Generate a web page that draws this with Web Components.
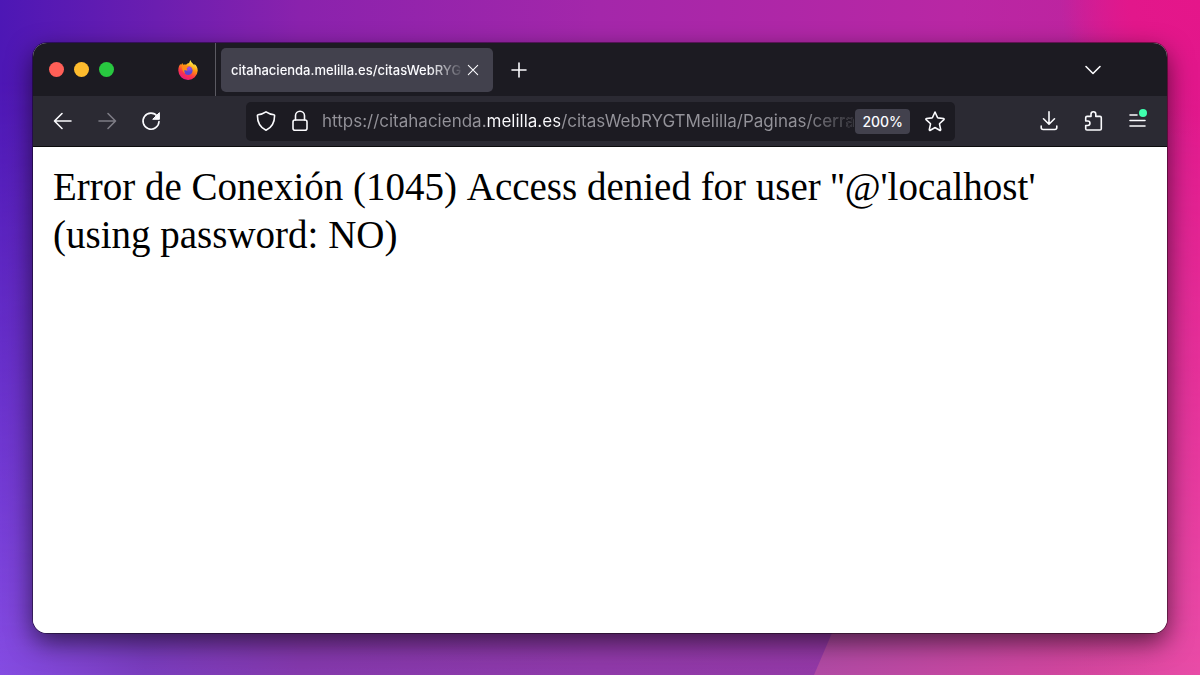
<!DOCTYPE html>
<html lang="es">
<head>
<meta charset="utf-8">
<title>citahacienda.melilla.es</title>
<style>
html, body { margin: 0; min-height: 100vh; }
body { font-family: Inter, "Liberation Sans", sans-serif; display: flex; }
</style>
</head>
<body>
<desktop-backdrop>
  <browser-window>
    <tab-strip slot="tabs"></tab-strip>
    <nav-toolbar slot="toolbar"></nav-toolbar>
    <page-view>Error de Conexión (1045) Access denied for user ''@'localhost' (using password: NO)</page-view>
  </browser-window>
</desktop-backdrop>
<script>
const define = (name, html) => customElements.define(name, class extends HTMLElement {
  constructor() {
    super();
    this.attachShadow({ mode: "open" }).innerHTML = html;
  }
});

define("desktop-backdrop", `
<style>
:host {
  flex: 1; display: flex; box-sizing: border-box; min-height: 100vh; padding: 43px 33px 42px; position: relative; isolation: isolate;
  background: linear-gradient(90deg, #4d17b5 0%, #6b1eb0 13%, #8a22ad 25%, #a427aa 50%, #b927a4 80%, #bd24a0 89%, #db1a90 97%, #e2178c 100%);
}
svg { position: absolute; inset: 0; width: 100%; height: 100%; z-index: -1; }
::slotted(*) { flex: 1; }
</style>
<svg viewBox="0 0 1200 675" preserveAspectRatio="none" aria-hidden="true">
  <defs>
    <linearGradient id="low"><stop offset="0" stop-color="#854ce2"/><stop offset=".12" stop-color="#793dbd"/><stop offset=".25" stop-color="#8439ac"/><stop offset=".5" stop-color="#8f3aa9"/><stop offset=".7" stop-color="#9339a6"/><stop offset=".88" stop-color="#cb459a"/><stop offset="1" stop-color="#e94ca7"/></linearGradient>
    <linearGradient id="fade" x1="0" y1="0" x2="0" y2="1"><stop offset=".12" stop-color="#000"/><stop offset="1" stop-color="#fff"/></linearGradient>
    <linearGradient id="pink" gradientUnits="userSpaceOnUse" x1="814" y1="0" x2="1160" y2="0"><stop offset="0" stop-color="#b04aa4"/><stop offset=".6" stop-color="#cb469f"/><stop offset="1" stop-color="#df47a0" stop-opacity="0"/></linearGradient>
    <radialGradient id="corner" gradientUnits="userSpaceOnUse" cx="1200" cy="0" r="140"><stop offset="0" stop-color="#e5168a"/><stop offset=".5" stop-color="#e2178b"/><stop offset="1" stop-color="#e2178b" stop-opacity="0"/></radialGradient>
    <mask id="m"><rect width="1200" height="675" fill="url(#fade)"/></mask>
  </defs>
  <rect width="1200" height="675" fill="url(#low)" mask="url(#m)"/>
  <rect x="1040" width="160" height="140" fill="url(#corner)"/>
  <path d="M814 675 832 633 850 590H1160V675Z" fill="url(#pink)"/>
</svg>
<slot></slot>`);

define("browser-window", `
<style>
:host {
  display: flex; flex-direction: column; min-width: 0; overflow: hidden; border-radius: 14px; background: #fff;
  box-shadow: 0 0 0 1px #0006, 0 9px 26px #0009;
}
::slotted(page-view) { flex: 1; }
</style>
<slot name="tabs"></slot><slot name="toolbar"></slot><slot></slot>`);

define("traffic-lights", `
<style>
:host { display: flex; gap: 10px; }
button { width: 15px; height: 15px; padding: 0; border: 0; border-radius: 50%; }
.close { background: #ff5f57; } .min { background: #febc2e; } .max { background: #28c840; }
</style>
<button class="close" aria-label="Cerrar"></button><button class="min" aria-label="Minimizar"></button><button class="max" aria-label="Maximizar"></button>`);

const ICONS = {
  back: '<path d="M20 12H4M11 4.500 3.500 12l7.500 7.500"/>',
  forward: '<path d="M4 12h16M13 4.500 20.500 12 13 19.500"/>',
  reload: '<path d="M18.300 7.200A8 8 0 1 0 20 12.500"/><path d="M20.400 4v6.300h-6.300z" fill="currentColor" stroke-width="1"/>',
  shield: '<path d="M12 2.800c2.500 1.700 5 2.600 8 3 .4 0 .6.300.6.700 0 6.500-2.300 11.800-8.600 14.800C5.700 18.300 3.400 13 3.400 6.500c0-.4.2-.7.6-.7 3-.4 5.500-1.300 8-3Z"/>',
  lock: '<rect x="5" y="11" width="14" height="10.200" rx="2"/><path d="M7.500 11V6.800a4.500 4.500 0 0 1 9 0V11"/>',
  star: '<path d="m12 3 2.500 5.500c.1.200.3.300.5.400l5.500.6c.6.100.8.700.4 1.100l-4.200 3.900c-.2.200-.3.400-.2.600l1.200 5.500c.1.600-.5 1-1 .7l-4.400-2.600a.6.600 0 0 0-.6 0l-4.400 2.600c-.5.300-1.100-.1-1-.7l1.200-5.500c.1-.2 0-.4-.2-.6L3.100 10.600c-.4-.4-.2-1 .4-1.100L9 8.900c.2-.1.400-.2.500-.4Z"/>',
  download: '<path d="M12 2.800V15M6.500 9.800 12 15.200l5.500-5.400M4.200 17v1.500c0 1.200.8 2 2 2h11.600c1.200 0 2-.8 2-2V17"/>',
  puzzle: '<path d="M6 21c-.8 0-1.300-.5-1.300-1.300V16.500h2a2.200 2.200 0 0 0 0-4.500h-2V8.700c0-.8.500-1.300 1.300-1.300h4V5.200a2.400 2.400 0 0 1 4.800 0v2.200h4.200c.8 0 1.300.5 1.300 1.300v11c0 .8-.5 1.300-1.300 1.300Z"/>',
  menu: '<path d="M5 6h7M5 11.500h15M5 17h15"/>',
  plus: '<path d="M12 5v14M5 12h14"/>',
  close: '<path d="m5 5 14 14M19 5 5 19"/>',
  down: '<path d="m5 8.500 7 7 7-7"/>',
};

customElements.define("icon-button", class extends HTMLElement {
  connectedCallback() {
    this.attachShadow({ mode: "open" }).innerHTML = `
<style>
:host { display: block; --size: 24px; color: #fbfbfe; }
:host([small]) { --size: 16px; }
button { display: block; position: relative; padding: 0; border: 0; background: none; color: inherit; }
button:disabled { color: #7d7c85; }
svg { display: block; width: var(--size); height: var(--size); fill: none; stroke: currentColor; stroke-width: 1.6; stroke-linecap: round; stroke-linejoin: round; }
i { position: absolute; top: 0; right: 2px; width: 8px; height: 8px; border-radius: 50%; background: #3fffae; box-shadow: 0 0 0 1px #2b2a33; }
</style>
<button aria-label="${this.getAttribute("label")}"${this.hasAttribute("off") ? " disabled" : ""}>
<svg viewBox="0 0 24 24" aria-hidden="true">${ICONS[this.getAttribute("icon")]}</svg>${this.hasAttribute("badge") ? "<i></i>" : ""}</button>`;
  }
});

define("firefox-logo", `
<style>:host { display: block; } svg { display: block; width: 20px; height: 20px; }</style>
<svg viewBox="0 0 20 20" role="img" aria-label="Firefox">
  <defs>
    <linearGradient id="f" x1=".8" y1="0" x2=".3" y2="1"><stop offset=".1" stop-color="#fff44f"/><stop offset=".4" stop-color="#ff980e"/><stop offset=".7" stop-color="#ff3647"/><stop offset="1" stop-color="#e31587"/></linearGradient>
    <radialGradient id="g" cx=".6" cy=".2"><stop offset="0" stop-color="#a84be8"/><stop offset="1" stop-color="#5b45d4"/></radialGradient>
  </defs>
  <path fill="url(#f)" d="M12.500 0c.3 1.800 1.500 2.700 2.700 4 .5.500.8 1 1 1.400l.3-1.500c2 1.400 3.300 3.900 3.200 6.900A9.600 9.600 0 0 1 10 20 9.700 9.700 0 0 1 .3 10.500c0-2.700.7-4.900 2.200-6.700l.4 1.500L4.300 3l.8 1.800c1-.4 2-.4 3 0 .8-1 2-1.500 3-1.700.3-.9.800-2.200 1.400-3.100Z"/>
  <circle cx="10.200" cy="10.600" r="4.400" fill="url(#g)"/>
  <path fill="#ff8a16" d="M4.300 5.200c1.400-.5 2.700-.2 3.900.8l2.600.3c.3.800-1.600 1.300-2 1.900-.2.900.2 1.400 1 1.700-1 .9-2.300.7-3.300.1-.5 1.300 0 2.300.8 3.200C4.500 12 3.500 8 4.300 5.200Z"/>
</svg>`);

define("tab-strip", `
<style>
:host { display: flex; align-items: center; height: 53px; background: #1c1b22; color: #fbfbfe; }
traffic-lights { margin-left: 16px; }
firefox-logo { margin-left: 64px; }
.rule { align-self: stretch; width: 1px; margin: 0 5px 0 17px; background: #5b5a62; }
.tab { display: flex; align-items: center; box-sizing: border-box; width: 272px; height: 44px; padding: 0 12px 0 10px; border-radius: 5px; background: #42414d; }
.title {
  flex: 1; min-width: 0; overflow: hidden; white-space: nowrap; font-size: 13px; font-weight: 500; line-height: 20px;
  -webkit-mask-image: linear-gradient(to left, transparent, #000 36px); mask-image: linear-gradient(to left, transparent, #000 36px);
}
.add { margin-left: 14px; }
.all { margin: 0 62px 0 auto; }
</style>
<traffic-lights></traffic-lights>
<firefox-logo></firefox-logo>
<span class="rule"></span>
<div class="tab"><span class="title">citahacienda.melilla.es/citasWebRYG</span><icon-button small icon="close" label="Cerrar pestaña"></icon-button></div>
<icon-button class="add" icon="plus" label="Nueva pestaña"></icon-button>
<icon-button class="all" icon="down" label="Listar pestañas"></icon-button>`);

define("address-bar", `
<style>
:host { display: flex; align-items: center; box-sizing: border-box; height: 39px; padding: 0 8px; border-radius: 5px; background: #1c1b22; }
.lock { margin: 0 10px; }
input {
  flex: 1; min-width: 0; height: 30px; padding: 0; border: 0; outline: 0; font: 17px Inter, "Liberation Sans", sans-serif; color: transparent;
  background: linear-gradient(to left, #1c1b22, #1c1b2200 52px), linear-gradient(90deg, #94939a 164px, #fbfbfe 164px 238px, #94939a 238px);
  -webkit-background-clip: text; background-clip: text;
}
.zoom { height: 25px; margin: 0 13px 0 0; padding: 0 7px; border: 0; border-radius: 4px; background: #42414d; color: #fbfbfe; font: 500 14px Inter, "Liberation Sans", sans-serif; }
</style>
<icon-button icon="shield" label="Protección"></icon-button>
<icon-button class="lock" icon="lock" label="Conexión segura"></icon-button>
<input aria-label="Dirección" value="https://citahacienda.melilla.es/citasWebRYGTMelilla/Paginas/cerra" spellcheck="false">
<button class="zoom">200%</button>
<icon-button icon="star" label="Añadir a marcadores"></icon-button>`);

define("nav-toolbar", `
<style>
:host { display: flex; align-items: center; justify-content: space-between; box-sizing: border-box; height: 51px; padding: 0 18px; border-bottom: 1px solid #0c0c0d; background: #2b2a33; }
.group { display: flex; gap: 20px; }
address-bar { flex: 1; margin: 0 82px 0 83px; }
</style>
<div class="group"><icon-button icon="back" label="Atrás"></icon-button><icon-button icon="forward" label="Adelante" off></icon-button><icon-button icon="reload" label="Recargar"></icon-button></div>
<address-bar></address-bar>
<div class="group"><icon-button icon="download" label="Descargas"></icon-button><icon-button icon="puzzle" label="Extensiones"></icon-button><icon-button icon="menu" label="Menú" badge></icon-button></div>`);

define("page-view", `
<style>
:host { display: block; padding: 16px 40px 16px 20px; background: #fff; color: #000; }
p { margin: 0; font: 39px/48px "Liberation Serif", serif; font-kerning: none; }
</style>
<p><slot></slot></p>`);
</script>
</body>
</html>
